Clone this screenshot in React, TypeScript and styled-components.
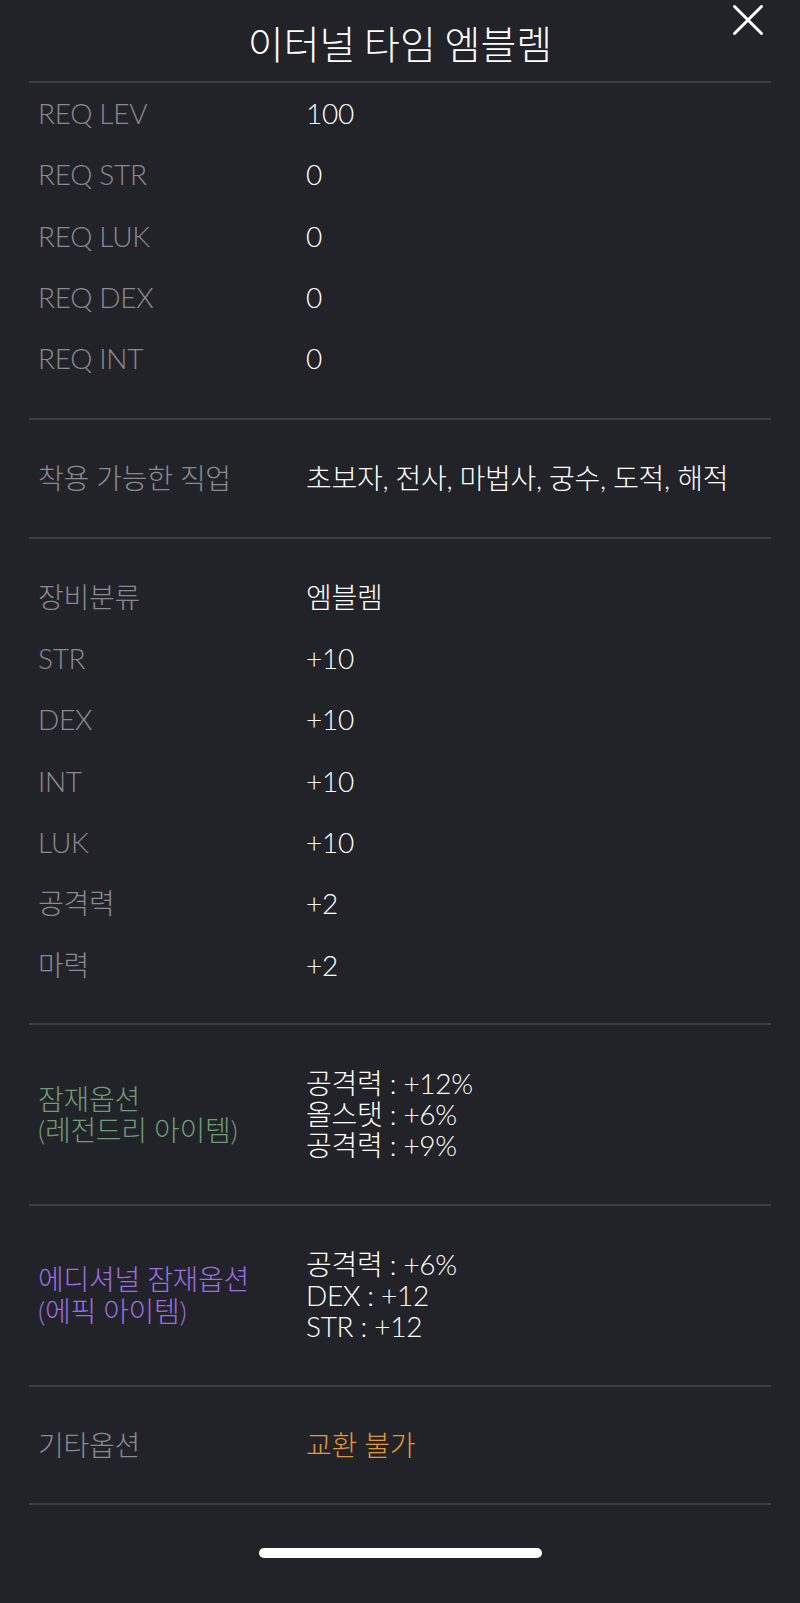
import styled, { createGlobalStyle } from "styled-components";

const GlobalStyle = createGlobalStyle`
  html, body {
    margin: 0;
    padding: 0;
    background: #222329;
  }
  body {
    font-family: Lato, "Noto Sans CJK KR", "Noto Sans", sans-serif;
    -webkit-font-smoothing: antialiased;
  }
`;

const Page = styled.div`
  width: 800px;
  height: 1603px;
  background: #222329;
  display: flex;
  flex-direction: column;
  position: relative;
  overflow: hidden;
`;

const Header = styled.header`
  height: 81px;
  margin: 0 29px;
  border-bottom: 2px solid #3b3c46;
  display: flex;
  align-items: center;
  justify-content: center;
  position: relative;
`;

const Title = styled.h1`
  margin: 0;
  font-family: "Noto Sans CJK KR", sans-serif;
  font-size: 39px;
  font-weight: 300;
  color: #ffffff;
  transform: translateY(1px);
`;

const CloseButton = styled.button`
  position: absolute;
  right: 5px;
  top: 2px;
  width: 36px;
  height: 36px;
  padding: 0;
  border: none;
  background: none;
  display: flex;
  align-items: center;
  justify-content: center;
  cursor: pointer;
`;

const Section = styled.section<{ $first?: boolean }>`
  margin: 0 29px;
  padding: ${(p) => (p.$first ? "0 0 29px" : "28px 0 27px")};
  border-bottom: 2px solid #3b3c46;
`;

const Row = styled.div`
  display: grid;
  grid-template-columns: 268px 1fr;
  align-items: center;
  padding: 15px 0 15px 9px;
  font-size: 28px;
  font-weight: 300;
  line-height: 31.3px;
  letter-spacing: -0.3px;
`;

const Label = styled.div<{ $tone?: "green" | "purple" }>`
  color: ${(p) =>
    p.$tone === "green" ? "#6f9c78" : p.$tone === "purple" ? "#9b6de0" : "#898a91"};
`;

const Value = styled.div<{ $tone?: "orange" }>`
  color: ${(p) => (p.$tone === "orange" ? "#e0983a" : "#ffffff")};
`;

const HomeIndicator = styled.div`
  position: absolute;
  left: 50%;
  bottom: 45px;
  width: 283px;
  height: 10px;
  margin-left: -141px;
  border-radius: 5px;
  background: #ffffff;
`;

type Item = { label: string; value: string };

const reqs: Item[] = [
  { label: "REQ LEV", value: "100" },
  { label: "REQ STR", value: "0" },
  { label: "REQ LUK", value: "0" },
  { label: "REQ DEX", value: "0" },
  { label: "REQ INT", value: "0" },
];

const stats: Item[] = [
  { label: "장비분류", value: "엠블렘" },
  { label: "STR", value: "+10" },
  { label: "DEX", value: "+10" },
  { label: "INT", value: "+10" },
  { label: "LUK", value: "+10" },
  { label: "공격력", value: "+2" },
  { label: "마력", value: "+2" },
];

function CloseIcon() {
  return (
    <svg width="30" height="30" viewBox="0 0 30 30">
      <path
        d="M1.5 1.5 L28.5 28.5 M28.5 1.5 L1.5 28.5"
        stroke="#ffffff"
        strokeWidth="3"
        strokeLinecap="round"
      />
    </svg>
  );
}

function Lines({ items }: { items: string[] }) {
  return (
    <>
      {items.map((t) => (
        <div key={t}>{t}</div>
      ))}
    </>
  );
}

export default function App() {
  return (
    <Page>
      <GlobalStyle />
      <Header>
        <Title>이터널 타임 엠블렘</Title>
        <CloseButton aria-label="닫기">
          <CloseIcon />
        </CloseButton>
      </Header>

      <Section $first>
        {reqs.map((r) => (
          <Row key={r.label}>
            <Label>{r.label}</Label>
            <Value>{r.value}</Value>
          </Row>
        ))}
      </Section>

      <Section>
        <Row>
          <Label>착용 가능한 직업</Label>
          <Value>초보자, 전사, 마법사, 궁수, 도적, 해적</Value>
        </Row>
      </Section>

      <Section>
        {stats.map((s) => (
          <Row key={s.label}>
            <Label>{s.label}</Label>
            <Value>{s.value}</Value>
          </Row>
        ))}
      </Section>

      <Section>
        <Row>
          <Label $tone="green">
            <Lines items={["잠재옵션", "(레전드리 아이템)"]} />
          </Label>
          <Value>
            <Lines items={["공격력 : +12%", "올스탯 : +6%", "공격력 : +9%"]} />
          </Value>
        </Row>
      </Section>

      <Section>
        <Row>
          <Label $tone="purple">
            <Lines items={["에디셔널 잠재옵션", "(에픽 아이템)"]} />
          </Label>
          <Value>
            <Lines items={["공격력 : +6%", "DEX : +12", "STR : +12"]} />
          </Value>
        </Row>
      </Section>

      <Section>
        <Row>
          <Label>기타옵션</Label>
          <Value $tone="orange">교환 불가</Value>
        </Row>
      </Section>

      <HomeIndicator />
    </Page>
  );
}
